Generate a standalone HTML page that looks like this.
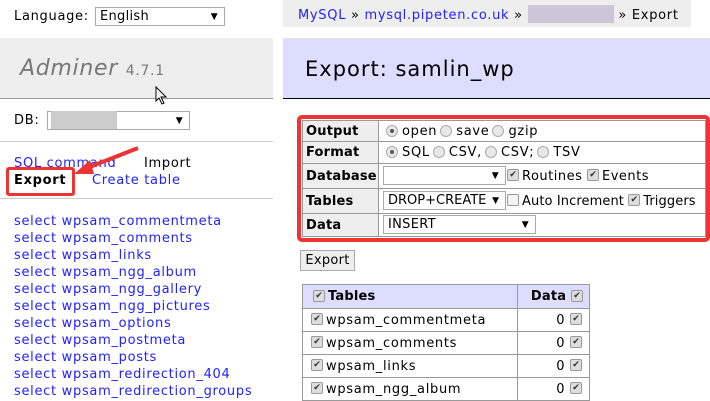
<!DOCTYPE html>
<html><head><meta charset="utf-8"><style>
*{margin:0;padding:0;box-sizing:border-box}
body{width:710px;height:401px;overflow:hidden;background:#fff;font-family:"DejaVu Sans","Liberation Sans",sans-serif;font-size:13px;color:#000;position:relative;letter-spacing:0.7px}
.a{position:absolute;white-space:nowrap}
a,.l{color:#22f;text-decoration:none}
.sel{position:absolute;border:1px solid #a9a9a9;background:#fff;height:19px;font-size:13px;padding:1px 4px;line-height:15px;letter-spacing:0.3px}
.sel::after{content:"▼";position:absolute;right:6px;top:2px;font-size:9px}
table{border-collapse:collapse;position:absolute;table-layout:fixed}
td,th{border:1px solid #999;padding:0 4px;text-align:left;white-space:nowrap;overflow:hidden}
th{background:#eee;font-weight:bold;letter-spacing:0.2px;padding:0 3px}
.cb{display:inline-block;width:12px;height:12px;border:1px solid #999;background:#ddd;border-radius:2px;vertical-align:middle;font-size:9px;line-height:10px;text-align:center;color:#333;margin:-2px 3px 0 0;letter-spacing:0}
.cb.e{background:#f4f4f4}
.rd{display:inline-block;width:12px;height:12px;border:1px solid #aaa;border-radius:50%;background:#e8e8e8;vertical-align:-2px;margin:0 4px 0 3px;position:relative}
.rd.on::after{content:"";position:absolute;left:3px;top:3px;width:4px;height:4px;border-radius:50%;background:#555}
</style></head><body>
<div class="a" style="left:14px;top:9px">Language:</div>
<div class="sel" style="left:95px;top:7px;width:130px">English</div>
<div class="a" style="left:0;top:38px;width:273px;height:61px;background:#eee;border-bottom:1px solid #999"></div>
<div class="a" style="left:20px;top:56px;font-size:22px;font-style:italic;color:#777">Adminer <span style="font-size:14px;font-style:normal">4.7.1</span></div>
<div class="a" style="left:14px;top:113px">DB:</div>
<div class="sel" style="left:47px;top:111px;width:143px"><span style="display:inline-block;width:66px;height:18px;background:#ccc;margin:-2px 0 0 -1px;vertical-align:top"></span></div>
<div class="a" style="left:0;top:141px;width:273px;border-top:1px solid #ccc"></div>
<div class="a" style="left:0;top:198px;width:273px;border-top:1px solid #ccc"></div>
<div class="a l" style="left:14px;top:156px">SQL command</div>
<div class="a" style="left:144px;top:156px">Import</div>
<div class="a" style="left:14px;top:173px;font-weight:bold;color:#000">Export</div>
<div class="a l" style="left:92px;top:173px">Create table</div>
<div class="a" style="left:6px;top:167px;width:69px;height:29px;border:3px solid #e33;border-radius:3px"></div>
<svg class="a" style="left:70px;top:140px" width="80" height="40"><line x1="68" y1="8" x2="12" y2="30" stroke="#e33" stroke-width="4"/><polygon points="4,34 20,20 24,34" fill="#e33"/></svg>
<div class="a l" style="left:14px;top:213px;line-height:17px">select wpsam_commentmeta<br>select wpsam_comments<br>select wpsam_links<br>select wpsam_ngg_album<br>select wpsam_ngg_gallery<br>select wpsam_ngg_pictures<br>select wpsam_options<br>select wpsam_postmeta<br>select wpsam_posts<br>select wpsam_redirection_404<br>select wpsam_redirection_groups</div>
<svg class="a" style="left:155px;top:86px" width="14" height="20"><path d="M1 1 L1 15 L4 12 L7 18 L9 17 L6 11 L11 11 Z" fill="#fff" stroke="#000"/></svg>

<div class="a" style="left:283px;top:0;width:408px;height:27px;background:#eee"></div>
<div class="a" style="left:298px;top:5px"><a>MySQL</a> » <a>mysql.pipeten.co.uk</a> » <span style="display:inline-block;width:86px;height:18px;background:#ccc6d6;vertical-align:-4px"></span> » Export</div>
<div class="a" style="left:283px;top:38px;width:427px;height:61px;background:#ddf;border-bottom:1px solid #000"></div>
<div class="a" style="left:305px;top:57px;font-size:21px;letter-spacing:1px">Export: samlin_wp</div>

<div class="a" style="left:297px;top:115px;width:413px;height:127px;border:4px solid #e33;border-radius:5px"></div>
<table style="left:302px;top:120px;width:404px">
<colgroup><col style="width:76px"><col></colgroup>
<tr style="height:21px"><th>Output</th><td><span class="rd on"></span>open<span class="rd"></span>save<span class="rd"></span>gzip</td></tr>
<tr style="height:22px"><th>Format</th><td><span class="rd on"></span>SQL<span class="rd"></span>CSV,<span class="rd"></span>CSV;<span class="rd"></span>TSV</td></tr>
<tr style="height:25px"><th>Database</th><td style="position:relative;padding-left:128px;letter-spacing:0.5px"><div class="sel" style="left:4px;top:2px;width:123px"></div><span class="cb">✔</span>Routines <span class="cb">✔</span>Events</td></tr>
<tr style="height:25px"><th>Tables</th><td style="position:relative;padding-left:128px;letter-spacing:0.1px"><div class="sel" style="left:4px;top:2px;width:123px;letter-spacing:0">DROP+CREATE</div><span class="cb e"></span>Auto Increment <span class="cb">✔</span>Triggers</td></tr>
<tr style="height:23px"><th>Data</th><td style="position:relative"><div class="sel" style="left:4px;top:1px;width:153px">INSERT</div></td></tr>
</table>
<div class="a" style="left:300px;top:250px;width:55px;height:21px;border:1px solid #aaa;background:#eee;text-align:center;line-height:19px;letter-spacing:0.3px">Export</div>

<table style="left:302px;top:284px;width:288px">
<colgroup><col style="width:215px"><col></colgroup>
<tr style="height:24px;background:#ddf"><th style="background:#ddf;padding-left:10px"><span class="cb">✔</span>Tables</th><th style="background:#ddf;text-align:right">Data <span class="cb">✔</span></th></tr>
<tr style="height:23px"><td style="padding-left:8px"><span class="cb">✔</span>wpsam_commentmeta</td><td style="text-align:right">0 <span class="cb">✔</span></td></tr>
<tr style="height:23px"><td style="padding-left:8px"><span class="cb">✔</span>wpsam_comments</td><td style="text-align:right">0 <span class="cb">✔</span></td></tr>
<tr style="height:23px"><td style="padding-left:8px"><span class="cb">✔</span>wpsam_links</td><td style="text-align:right">0 <span class="cb">✔</span></td></tr>
<tr style="height:23px"><td style="padding-left:8px"><span class="cb">✔</span>wpsam_ngg_album</td><td style="text-align:right">0 <span class="cb">✔</span></td></tr>
</table>
</body></html>
